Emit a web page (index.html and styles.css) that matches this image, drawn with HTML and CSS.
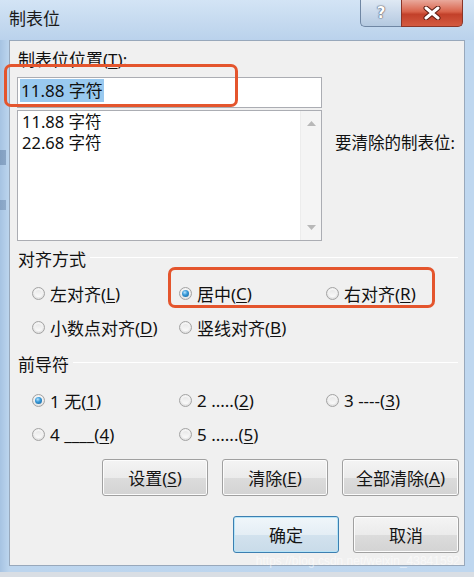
FILE: index.html
```html
<!DOCTYPE html>
<html lang="zh-CN">
<head>
<meta charset="utf-8">
<title>制表位</title>
<link rel="stylesheet" href="styles.css">
</head>
<body>
<div class="window">
  <div class="titlebar">
    <span class="title">制表位</span>
    <div class="caption">
      <div class="cap help"><span class="q">?</span></div>
      <div class="cap close">
        <svg width="20" height="14" viewBox="0 0 20 14"><path d="M4 2 L16 12 M16 2 L4 12" stroke="#5a1a10" stroke-width="5" stroke-linecap="round"/><path d="M4 2 L16 12 M16 2 L4 12" stroke="#fff" stroke-width="3" stroke-linecap="round"/></svg>
      </div>
    </div>
  </div>

  <div class="panel">
    <div class="label">制表位位置(<u>T</u>):</div>
    <div class="top">
      <div class="leftcol">
        <div class="input"><span class="sel">11.88 字符</span></div>
        <div class="list">
          <div class="items">
            <div class="item">11.88 字符</div>
            <div class="item">22.68 字符</div>
          </div>
          <div class="scroll">
            <svg width="9" height="5" viewBox="0 0 9 5"><path d="M0 5 L4.5 0 L9 5 Z" fill="#b8b8b8"/></svg>
            <svg width="9" height="5" viewBox="0 0 9 5"><path d="M0 0 L4.5 5 L9 0 Z" fill="#b8b8b8"/></svg>
          </div>
        </div>
      </div>
      <div class="clearlabel">要清除的制表位:</div>
    </div>

    <div class="group align-group"><span>对齐方式</span><i class="rule"></i></div>
    <div class="radios">
      <div class="radio"><span class="dot"></span>左对齐(<u>L</u>)</div>
      <div class="radio"><span class="dot on"></span>居中(<u>C</u>)</div>
      <div class="radio"><span class="dot"></span>右对齐(<u>R</u>)</div>
      <div class="radio"><span class="dot"></span>小数点对齐(<u>D</u>)</div>
      <div class="radio"><span class="dot"></span>竖线对齐(<u>B</u>)</div>
    </div>

    <div class="group leader-group"><span>前导符</span><i class="rule"></i></div>
    <div class="radios leaders">
      <div class="radio"><span class="dot on"></span>1 无(<u>1</u>)</div>
      <div class="radio"><span class="dot"></span>2 .....(<u>2</u>)</div>
      <div class="radio"><span class="dot"></span>3 ----(<u>3</u>)</div>
      <div class="radio"><span class="dot"></span>4 ____(<u>4</u>)</div>
      <div class="radio"><span class="dot"></span>5 ......(<u>5</u>)</div>
    </div>

    <div class="btnrow first">
      <div class="btn">设置(<u>S</u>)</div>
      <div class="btn">清除(<u>E</u>)</div>
      <div class="btn wide">全部清除(<u>A</u>)</div>
    </div>
    <div class="btnrow second">
      <div class="btn default">确定</div>
      <div class="btn">取消</div>
    </div>
    <div class="watermark">https://blog.csdn.net/weixin_43841592</div>
  </div>

  <div class="mark mark-pos"></div>
  <div class="mark mark-align"></div>
</div>
</body>
</html>
```

FILE: styles.css
```css
* { box-sizing: border-box; }
html, body { margin: 0; padding: 0; }
body {
  width: 474px;
  height: 577px;
  overflow: hidden;
  background: #d9dee4;
  font-family: "Noto Sans", "Noto Sans CJK SC", sans-serif;
  font-size: 16px;
  color: #111;
}
u { text-decoration: underline; text-underline-offset: 2px; text-decoration-thickness: 1px; }

.window {
  position: relative;
  width: 474px;
  height: 572px;
  background:
    linear-gradient(to bottom, transparent 0, transparent 150px, rgba(60,90,130,0.35) 150px, rgba(60,90,130,0.35) 165px, transparent 165px, transparent 200px, rgba(60,90,130,0.3) 200px, rgba(60,90,130,0.3) 210px, transparent 210px) left top / 6px 100% no-repeat,
    linear-gradient(to right, #a6c3e2 0px, #bcd5ee 9px, #bfd7ef 100%);
  display: flex;
  flex-direction: column;
}

.titlebar {
  height: 40px;
  display: flex;
  align-items: flex-start;
  background: linear-gradient(to bottom, #d3e4f5 0%, #c4d9ef 60%, #bad2ec 100%);
}
.title {
  font-family: "Noto Sans CJK SC", sans-serif;
  font-size: 17px;
  line-height: 22px;
  margin: 7px 0 0 9px;
  color: #1a1a1a;
}
.caption {
  margin-left: auto;
  margin-right: 11px;
  display: flex;
}
.cap {
  height: 27px;
  display: flex;
  align-items: center;
  justify-content: center;
  border: 1px solid #6f86a3;
  border-top: none;
}
.help {
  width: 41px;
  border-right: none;
  border-bottom-left-radius: 5px;
  background: linear-gradient(to bottom, #dfe9f4 0%, #c9d8ea 50%, #b4c9e0 100%);
}
.q {
  font-family: "DejaVu Sans", sans-serif;
  font-weight: bold;
  font-size: 15px;
  color: #fff;
  text-shadow: 0 0 1px #556, 0 0 1px #556, 0 0 2px #778;
}
.close {
  width: 62px;
  border-color: #8a3528;
  border-bottom-right-radius: 5px;
  background: linear-gradient(to bottom, #e9a99c 0%, #d9634b 45%, #c2402a 55%, #d45a40 100%);
}

.panel {
  position: relative;
  margin: 0 9px 0 9px;
  height: 526px;
  background: #f0f0f0;
  border: 1px solid #98a8bb;
  padding: 8px 5px 0 7px;
  font-family: "Noto Sans", "Noto Sans CJK SC", sans-serif;
}
.label {
  font-size: 17px;
  line-height: 22px;
  height: 22px;
  margin-left: 1px;
}

.top { display: flex; margin-top: 6px; }
.leftcol { width: 305px; display: flex; flex-direction: column; gap: 2px; }
.input {
  height: 31px;
  background: #fff;
  border: 1px solid #abadb3;
  padding: 2px 0 0 2px;
  font-size: 17px;
  line-height: 22px;
}
.sel { background: #99c9ef; padding: 0 1px; }
.list {
  height: 131px;
  background: #fff;
  border: 1px solid #abadb3;
  display: flex;
}
.items {
  flex: 1;
  padding: 0 0 0 4px;
  display: flex;
  flex-direction: column;
  gap: 0;
}
.item {
  font-size: 16.5px;
  line-height: 21px;
  height: 21px;
}
.scroll {
  width: 21px;
  background: #f4f4f4;
  border-left: 1px solid #ececec;
  display: flex;
  flex-direction: column;
  align-items: center;
  justify-content: space-between;
  padding: 10px 0 10px;
}
.clearlabel {
  margin: 55px 0 0 13px;
  font-size: 16.5px;
  line-height: 22px;
  height: 22px;
  white-space: nowrap;
}

.group {
  display: flex;
  align-items: center;
  height: 22px;
  font-size: 17px;
  line-height: 22px;
  margin-left: 1px;
}
.align-group { margin-top: 8px; }
.leader-group { margin-top: 10px; }
.rule {
  flex: 1;
  height: 1px;
  background: #dcdcdc;
  border-bottom: 1px solid #fff;
  margin: -6px 1px 0 4px;
}

.radios {
  display: grid;
  grid-template-columns: 147px 147px 147px;
  grid-auto-rows: 34px;
  padding-left: 15px;
  margin-top: 5px;
}
.leaders { margin-top: 7px; grid-auto-rows: 34px; }
.radio {
  display: flex;
  align-items: center;
  font-size: 17px;
  white-space: nowrap;
}
.dot {
  width: 13px;
  height: 13px;
  border-radius: 50%;
  border: 1px solid #a3a3a3;
  background: radial-gradient(circle at 50% 40%, #ffffff 0%, #f2f2f2 45%, #d2d2d2 100%);
  margin-right: 5px;
  flex: none;
  position: relative;
}
.dot::after {
  content: "";
  position: absolute;
  left: 2px; top: 2px;
  width: 7px; height: 7px;
  border-radius: 50%;
  background: linear-gradient(to bottom, #e8e8e8, #fafafa);
}
.dot.on::after {
  left: 2px; top: 2px;
  background: radial-gradient(circle at 40% 35%, #b9e5ff 0%, #3a9ad8 40%, #0f5d97 100%);
}

.btnrow {
  display: flex;
  justify-content: flex-end;
  gap: 14px;
}
.btnrow.first { margin-top: 8px; }
.btnrow.second { margin-top: 20px; }
.btn {
  width: 106px;
  height: 37px;
  border: 1px solid #a0a0a0;
  border-radius: 3px;
  background: linear-gradient(to bottom, #f4f4f4 0%, #ebebeb 50%, #dcdcdc 51%, #d3d3d3 100%);
  box-shadow: inset 0 0 0 1px #fcfcfc;
  display: flex;
  align-items: center;
  justify-content: center;
  font-size: 17px;
  color: #151515;
}
.btn.wide { width: 117px; }
.btn.default {
  border-color: #3c7fb1;
  box-shadow: inset 0 0 0 1px #b6e4f7;
  background: linear-gradient(to bottom, #f0f6fa 0%, #e4eef5 50%, #d2e2ee 51%, #c9dbe9 100%);
}
.watermark {
  position: absolute;
  right: 4px;
  bottom: -3px;
  font-size: 12px;
  color: rgba(255,255,255,0.55);
  font-family: "Liberation Sans", sans-serif;
}

.mark {
  position: absolute;
  border: 3px solid #e4552d;
  border-radius: 7px;
}
.mark-pos { left: 4px; top: 64px; width: 234px; height: 43px; }
.mark-align { left: 168px; top: 267px; width: 267px; height: 41px; }
```
